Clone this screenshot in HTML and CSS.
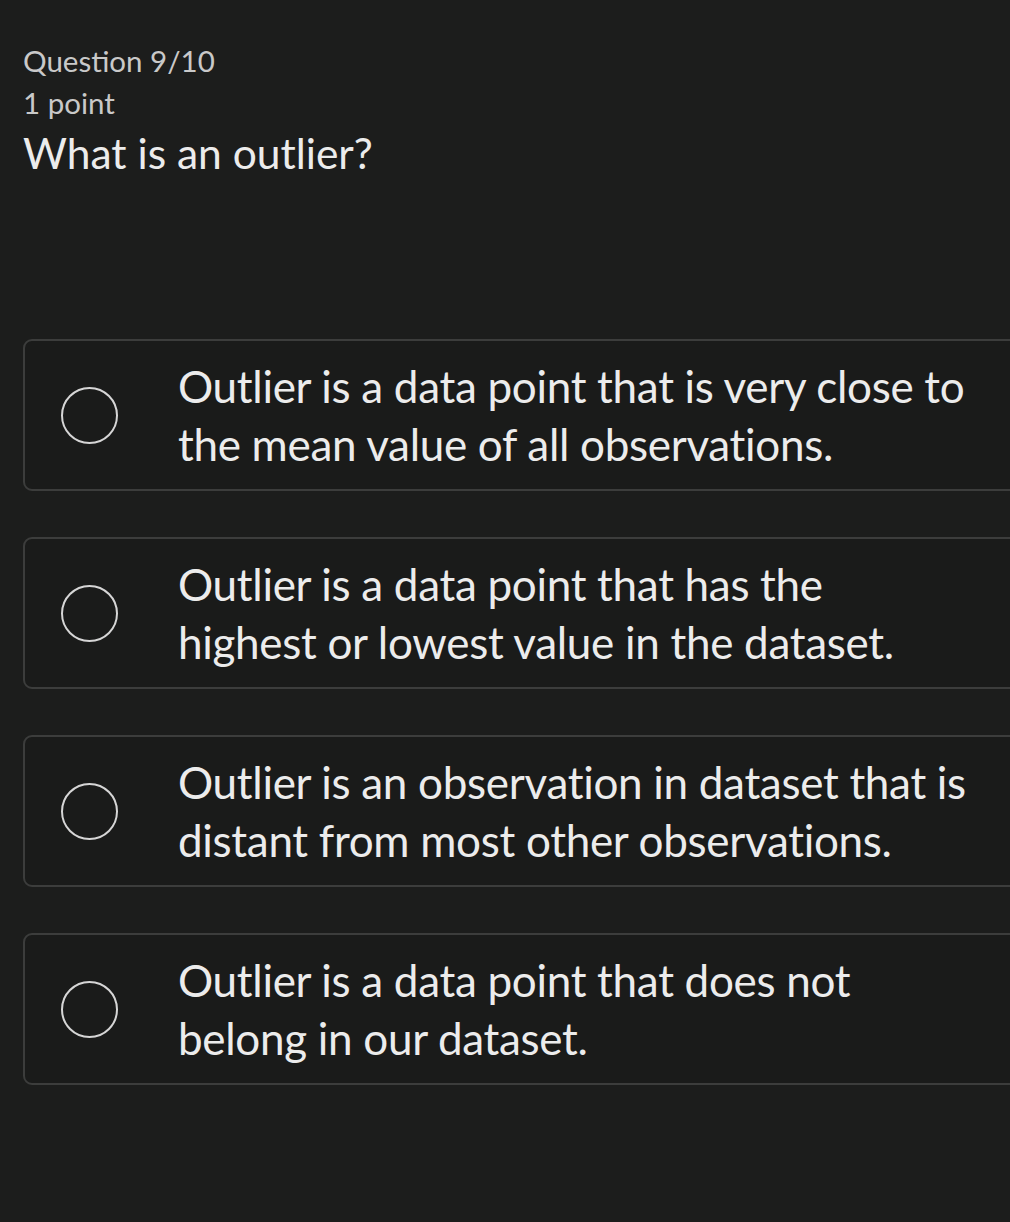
FILE: index.html
```html
<!DOCTYPE html>
<html lang="en">
<head>
    <meta charset="UTF-8">
    <meta name="viewport" content="width=device-width, initial-scale=1.0">
    <title>Quiz</title>
    <link rel="stylesheet" href="styles.css">
</head>
<body>
    <main class="quiz">
        <div class="question-head">
            <div class="counter">Question 9/10</div>
            <div class="points">1 point</div>
            <h1 class="question">What is an outlier?</h1>
        </div>

        <div class="options">
            <label class="option">
                <span class="radio"></span>
                <span class="option-text">Outlier is a data point that is very close to the mean value of all observations.</span>
            </label>
            <label class="option">
                <span class="radio"></span>
                <span class="option-text">Outlier is a data point that has the highest or lowest value in the dataset.</span>
            </label>
            <label class="option">
                <span class="radio"></span>
                <span class="option-text">Outlier is an observation in dataset that is distant from most other observations.</span>
            </label>
            <label class="option">
                <span class="radio"></span>
                <span class="option-text">Outlier is a data point that does not belong in our dataset.</span>
            </label>
        </div>
    </main>
</body>
</html>
```

FILE: styles.css
```css
* {
    box-sizing: border-box;
    font-family: 'Lato', 'Noto Sans', sans-serif;
}

html, body {
    margin: 0;
    background-color: #1c1d1c;
    overflow: hidden;
}

.quiz {
    padding: 40px 0 0 23px;
}

.question-head {
    color: #c9c9c9;
}

.counter {
    font-size: 29.5px;
    line-height: 42px;
}

.points {
    font-size: 29.5px;
    line-height: 42px;
}

.question {
    margin: 0;
    font-weight: normal;
    font-size: 42.5px;
    line-height: 58px;
    color: #ececec;
}

.options {
    margin-top: 157px;
    display: flex;
    flex-direction: column;
    gap: 46px;
    width: 1000px;
}

.option {
    display: flex;
    align-items: center;
    height: 152px;
    border: 2px solid #3c3d3c;
    border-radius: 9px;
    background-color: #1a1b1a;
    cursor: pointer;
}

.radio {
    flex: none;
    width: 57px;
    height: 57px;
    margin-left: 36px;
    margin-right: 60px;
    border: 2.5px solid #d6d6d6;
    border-radius: 50%;
}

.option-text {
    color: #ececec;
    font-size: 44px;
    letter-spacing: -0.3px;
    line-height: 58px;
    max-width: 791px;
}
```
